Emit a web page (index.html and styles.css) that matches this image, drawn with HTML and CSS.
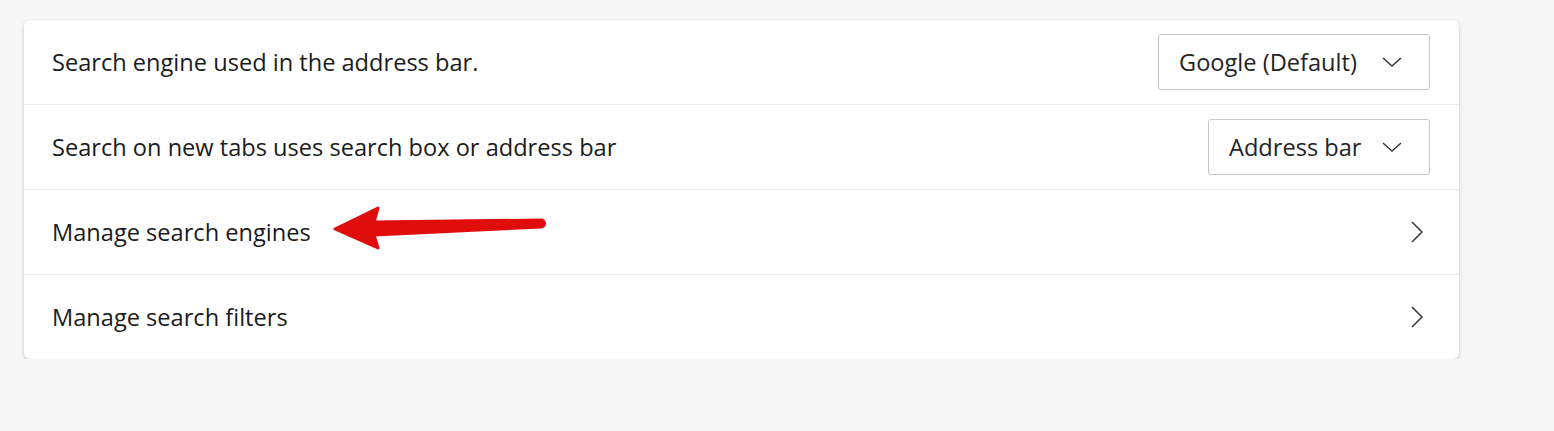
FILE: index.html
```html
<!DOCTYPE html>
<html>
<head>
<meta charset="utf-8">
<link rel="stylesheet" href="styles.css">
</head>
<body>
<div class="page">
  <div class="card">
    <div class="row">
      <span class="label">Search engine used in the address bar.</span>
      <div class="select wide"><span>Google (Default)</span>
        <svg class="chev-down" width="20" height="10" viewBox="0 0 20 10"><path d="M1 1 L10 9 L19 1" fill="none" stroke="#333" stroke-width="1.4"/></svg>
      </div>
    </div>
    <div class="row">
      <span class="label">Search on new tabs uses search box or address bar</span>
      <div class="select"><span>Address bar</span>
        <svg class="chev-down" width="20" height="10" viewBox="0 0 20 10"><path d="M1 1 L10 9 L19 1" fill="none" stroke="#333" stroke-width="1.4"/></svg>
      </div>
    </div>
    <div class="row">
      <span class="label">Manage search engines</span>
      <svg class="chev-right" width="12" height="22" viewBox="0 0 12 22"><path d="M1 1 L11 11 L1 21" fill="none" stroke="#333" stroke-width="1.5"/></svg>
    </div>
    <div class="row">
      <span class="label">Manage search filters</span>
      <svg class="chev-right" width="12" height="22" viewBox="0 0 12 22"><path d="M1 1 L11 11 L1 21" fill="none" stroke="#333" stroke-width="1.5"/></svg>
    </div>
    <svg class="arrow" width="220" height="55" viewBox="0 0 220 55"><path d="M5 29 L48 8 L44 22 L211 20 A3.5 3.5 0 0 1 211 27 L44 35 L48 48 Z" fill="#e00d0d" stroke="#e00d0d" stroke-width="3" stroke-linejoin="round"/></svg>
  </div>
</div>
</body>
</html>
```

FILE: styles.css
```css
html, body {
  margin: 0;
  padding: 0;
  background: #f7f7f7;
}
.page {
  padding: 20px 0 0 24px;
}
.card {
  position: relative;
  width: 1435px;
  background: #fff;
  border-radius: 6px;
  box-shadow: 0 2px 4px rgba(0,0,0,0.16), 0 0 2px rgba(0,0,0,0.10);
  font-family: "Open Sans", "Noto Sans", sans-serif;
  color: #1b1b1b;
}
.row {
  height: 84px;
  display: flex;
  align-items: center;
  justify-content: space-between;
  padding: 0 29px 0 28px;
  border-top: 1px solid #ebebeb;
}
.row:first-child {
  border-top: none;
}
.label {
  font-size: 23.6px;
}
.select {
  height: 56px;
  box-sizing: border-box;
  width: 222px;
  border: 1px solid #c6c6c6;
  border-radius: 3px;
  display: flex;
  align-items: center;
  justify-content: space-between;
  padding: 0 27px 0 20px;
  font-size: 23.6px;
  color: #242424;
}
.select.wide {
  width: 272px;
}
.chev-right {
  margin-right: 7px;
}
.arrow {
  position: absolute;
  left: 306px;
  top: 180px;
}
```
